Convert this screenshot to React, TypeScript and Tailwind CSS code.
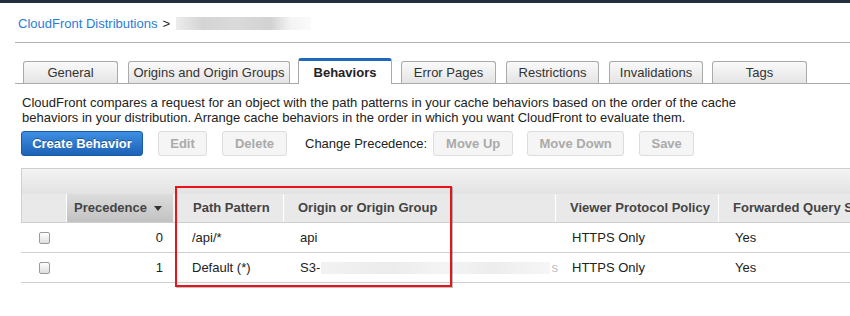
const tabs = [
  { label: "General", w: "w-[95px]", ml: "ml-[8px]" },
  { label: "Origins and Origin Groups", w: "w-[162px]", ml: "ml-[10px]" },
  { label: "Behaviors", w: "w-[94px]", ml: "ml-[8px]", active: true },
  { label: "Error Pages", w: "w-[95px]", ml: "ml-[9px]" },
  { label: "Restrictions", w: "w-[93px]", ml: "ml-[10px]" },
  { label: "Invalidations", w: "w-[94px]", ml: "ml-[10px]" },
  { label: "Tags", w: "w-[95px]", ml: "ml-[9px]" },
];

const rows = [
  { prec: "0", path: "/api/*", origin: "api", viewer: "HTTPS Only", query: "Yes" },
  { prec: "1", path: "Default (*)", origin: "S3-", viewer: "HTTPS Only", query: "Yes", blurred: true },
];

function GrayButton({ label, w }: { label: string; w: string }) {
  return (
    <div
      className={`${w} flex h-[25px] items-center justify-center rounded-[3px] border border-[#dcdcdc] bg-[#f5f5f5] text-[13px] font-bold text-[#aaa]`}
    >
      {label}
    </div>
  );
}

function Checkbox() {
  return (
    <div className="h-[12px] w-[11px] rounded-[2px] border border-[#9a9a9a] bg-gradient-to-b from-white to-[#dedede]" />
  );
}

export default function App() {
  return (
    <div className="relative h-[316px] w-[850px] overflow-hidden bg-white font-['Liberation_Sans',Arial,sans-serif] text-[#222]">
      {/* console top bar */}
      <div className="h-[3px] bg-[#232f3e]" />

      {/* breadcrumb */}
      <div className="flex h-[39px] items-center pl-[18px] pt-[2px] text-[13px]">
        <span className="text-[#2a7dd4]">CloudFront Distributions</span>
        <span className="ml-[5px] text-[#222]">&gt;</span>
        <span className="ml-[6px] inline-block h-[13px] w-[135px] bg-[linear-gradient(90deg,#ececec_0%,#d4d4d4_20%,#dadada_45%,#d2d2d2_70%,#f4f4f4_85%,#fafafa_100%)]" />
      </div>
      <div className="ml-[15px] border-t border-[#b0b0b0]" />

      {/* tabs */}
      <div className="ml-[15px] mt-[15px] flex h-[26px] items-end border-b border-[#aaa]">
        {tabs.map((t) =>
          t.active ? (
            <div
              key={t.label}
              className={`${t.w} ${t.ml} -mb-px flex h-[26px] items-center justify-center rounded-t-[3px] border-x border-t-[3px] border-x-[#aaa] border-t-[#1f68c0] bg-white text-[13px] font-bold text-[#222]`}
            >
              {t.label}
            </div>
          ) : (
            <div
              key={t.label}
              className={`${t.w} ${t.ml} flex h-[22px] items-center justify-center rounded-t-[3px] border-x border-t border-[#aaa] bg-gradient-to-b from-[#fafafa] to-[#e4e4e4] text-[13px] text-[#333]`}
            >
              {t.label}
            </div>
          ),
        )}
      </div>

      {/* description */}
      <p className="mt-[11px] pl-[22px] text-[13px] leading-[15px] text-[#222]">
        CloudFront compares a request for an object with the path patterns in your cache behaviors based on the order of the cache
        <br />
        behaviors in your distribution. Arrange cache behaviors in the order in which you want CloudFront to evaluate them.
      </p>

      {/* actions */}
      <div className="mt-[6px] flex items-center pl-[21px]">
        <div className="flex h-[25px] w-[122px] items-center justify-center rounded-[3px] border border-[#1b5aa6] bg-gradient-to-b from-[#3d8fe3] to-[#1d62b6] text-[13px] font-bold text-white [text-shadow:0_-1px_0_rgba(0,0,0,0.35)]">
          Create Behavior
        </div>
        <div className="ml-[15px]">
          <GrayButton label="Edit" w="w-[49px]" />
        </div>
        <div className="ml-[15px]">
          <GrayButton label="Delete" w="w-[65px]" />
        </div>
        <span className="ml-[18px] text-[13px] text-[#222]">Change Precedence:</span>
        <div className="ml-[6px]">
          <GrayButton label="Move Up" w="w-[80px]" />
        </div>
        <div className="ml-[14px]">
          <GrayButton label="Move Down" w="w-[97px]" />
        </div>
        <div className="ml-[15px]">
          <GrayButton label="Save" w="w-[55px]" />
        </div>
      </div>

      {/* table */}
      <div className="ml-[21px] mt-[12px] w-[900px] text-[13px]">
        <div className="h-[26px] border-x border-t border-[#cfcfcf] bg-gradient-to-b from-[#f3f3f3] to-[#e3e3e3]" />
        <div className="flex h-[29px] border-x border-b border-[#cfcfcf] bg-[#e9e9e9] font-bold text-[#444]">
          <div className="w-[45px] border-r border-white" />
          <div className="flex w-[109px] items-center border-r-[3px] border-[#f2f2f2] bg-gradient-to-b from-[#dcdcdc] to-[#c2c2c2] pl-[7px] pr-[11px]">
            <span className="flex-1">Precedence</span>
            <svg width="8" height="5" viewBox="0 0 8 5">
              <path d="M0 0h8L4 5z" fill="#333" />
            </svg>
          </div>
          <div className="flex w-[108px] items-center border-r border-white pl-[17px]">Path Pattern</div>
          <div className="flex w-[272px] items-center border-r border-white pl-[14px]">Origin or Origin Group</div>
          <div className="flex w-[163px] items-center border-r border-white pl-[14px]">Viewer Protocol Policy</div>
          <div className="flex flex-1 items-center pl-[14px]">Forwarded Query Strings</div>
        </div>
        {rows.map((r) => (
          <div key={r.prec} className="flex h-[30px] items-center border-b border-[#cfcfcf] text-[#222]">
            <div className="flex w-[45px] justify-center pl-px">
              <Checkbox />
            </div>
            <div className="w-[109px] pr-[12px] text-right">{r.prec}</div>
            <div className="w-[111px] pl-[17px]">{r.path}</div>
            <div className="flex w-[272px] items-center pl-[14px]">
              {r.origin}
              {r.blurred && (
                <>
                  <span className="ml-[1px] inline-block h-[12px] w-[232px] bg-[linear-gradient(90deg,#f2f2f2_0%,#ececec_30%,#f4f4f4_55%,#ededed_75%,#f6f6f6_100%)]" />
                  <span className="ml-[2px] text-[#bbb]">s</span>
                </>
              )}
            </div>
            <div className="w-[163px] pl-[14px]">{r.viewer}</div>
            <div className="flex-1 pl-[14px]">{r.query}</div>
          </div>
        ))}
      </div>

      {/* highlight annotation */}
      <div className="pointer-events-none absolute left-[175px] top-[186px] h-[101px] w-[277px] border-[2px] border-[#e8131b] shadow-[1px_1px_0_rgba(0,0,0,0.25)]" />
    </div>
  );
}
